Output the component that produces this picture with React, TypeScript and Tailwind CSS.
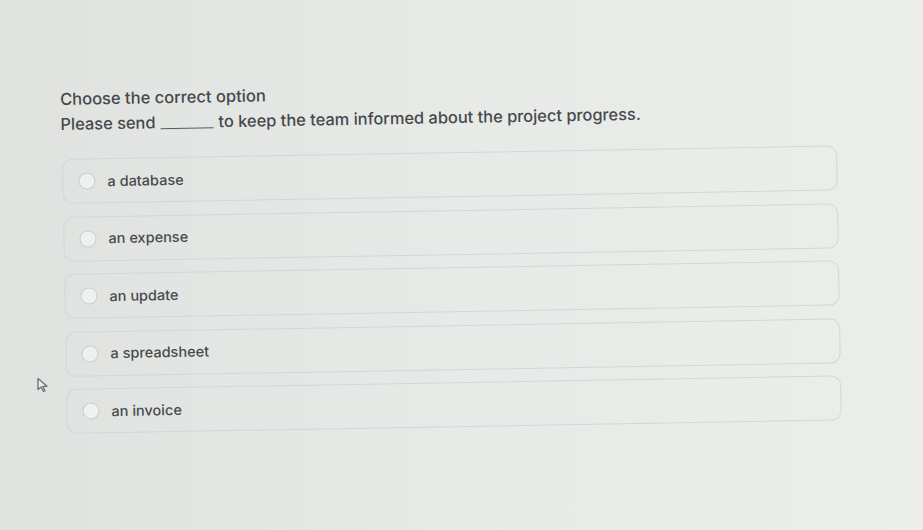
import React from "react";

const options = ["a database", "an expense", "an update", "a spreadsheet", "an invoice"];

export default function App() {
  return (
    <div
      className="relative w-[923px] h-[530px] overflow-hidden bg-gradient-to-r from-[#e0e2df] via-[#e8eae7] to-[#eceeea] text-[#4a4e52]"
      style={{ fontFamily: "Inter, 'Noto Sans', sans-serif" }}
    >
      <div className="w-full h-full -rotate-1">
        <div className="pt-[81px] pl-[63px]">
          <div className="text-[16.5px] leading-[22px] font-medium text-[#45494d]">Choose the correct option</div>
          <div className="mt-[3px] text-[16.4px] leading-[22px] font-medium text-[#45494d] flex items-end">
            <span>Please send</span>
            <span className="inline-block w-[53px] ml-[5px] mr-[5px] mb-[4px] border-b-[1.5px] border-[#55595d]"></span>
            <span>to keep the team informed about the project progress.</span>
          </div>
        </div>
        <div className="mt-[24px] ml-[64px] w-[775px] flex flex-col gap-[12.5px]">
          {options.map((o) => (
            <div
              key={o}
              className="h-[45px] rounded-[10px] border-[1.5px] border-[#d3d7d6] flex items-center pl-[15px] gap-[12px]"
            >
              <span className="w-[17px] h-[17px] rounded-full border-[1.5px] border-[#c9cdcc] bg-[#eff1ee]"></span>
              <span className="text-[14.5px] font-medium text-[#474b4f]">{o}</span>
            </div>
          ))}
        </div>
      </div>
      <svg className="absolute left-[36px] top-[377px]" width="14" height="16" viewBox="0 0 14 16">
        <path d="M2 1.5 L2 12.5 L5 10 L7.5 14.5 L9 13.7 L6.8 9.3 L11 9.3 Z" fill="#eceeea" stroke="#6c7074" strokeWidth="1.3" strokeLinejoin="round" />
      </svg>
    </div>
  );
}
